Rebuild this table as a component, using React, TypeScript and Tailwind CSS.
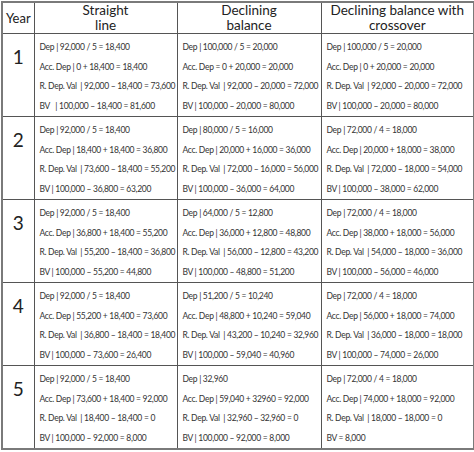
import React from "react";

type Cell = string[];

const rows: { year: string; cols: Cell[] }[] = [
  {
    year: "1",
    cols: [
      ["Dep | 92,000 / 5 = 18,400", "Acc. Dep | 0 + 18,400 = 18,400", "R. Dep. Val  | 92,000 – 18,400 = 73,600", "BV   | 100,000 – 18,400 = 81,600"],
      ["Dep | 100,000 / 5 = 20,000", "Acc. Dep = 0 + 20,000 = 20,000", "R. Dep. Val  | 92,000 – 20,000 = 72,000", "BV | 100,000 – 20,000 = 80,000"],
      ["Dep | 100,000 / 5 = 20,000", "Acc. Dep | 0 + 20,000 = 20,000", "R. Dep. Val  | 92,000 – 20,000 = 72,000", "BV | 100,000 – 20,000 = 80,000"],
    ],
  },
  {
    year: "2",
    cols: [
      ["Dep | 92,000 / 5 = 18,400", "Acc. Dep | 18,400 + 18,400 = 36,800", "R. Dep. Val  | 73,600 – 18,400 = 55,200", "BV | 100,000 – 36,800 = 63,200"],
      ["Dep | 80,000 / 5 = 16,000", "Acc. Dep | 20,000 + 16,000 = 36,000", "R. Dep. Val  | 72,000 – 16,000 = 56,000", "BV | 100,000 – 36,000 = 64,000"],
      ["Dep | 72,000 / 4 = 18,000", "Acc. Dep | 20,000 + 18,000 = 38,000", "R. Dep. Val  | 72,000 – 18,000 = 54,000", "BV | 100,000 – 38,000 = 62,000"],
    ],
  },
  {
    year: "3",
    cols: [
      ["Dep | 92,000 / 5 = 18,400", "Acc. Dep | 36,800 + 18,400 = 55,200", "R. Dep. Val  | 55,200 – 18,400 = 36,800", "BV | 100,000 – 55,200 = 44,800"],
      ["Dep | 64,000 / 5 = 12,800", "Acc. Dep | 36,000 + 12,800 = 48,800", "R. Dep. Val  | 56,000 – 12,800 = 43,200", "BV | 100,000 – 48,800 = 51,200"],
      ["Dep | 72,000 / 4 = 18,000", "Acc. Dep | 38,000 + 18,000 = 56,000", "R. Dep. Val  | 54,000 – 18,000 = 36,000", "BV | 100,000 – 56,000 = 46,000"],
    ],
  },
  {
    year: "4",
    cols: [
      ["Dep | 92,000 / 5 = 18,400", "Acc. Dep | 55,200 + 18,400 = 73,600", "R. Dep. Val  | 36,800 – 18,400 = 18,400", "BV | 100,000 – 73,600 = 26,400"],
      ["Dep | 51,200 / 5 = 10,240", "Acc. Dep | 48,800 + 10,240 = 59,040", "R. Dep. Val  | 43,200 – 10,240 = 32,960", "BV | 100,000 – 59,040 = 40,960"],
      ["Dep | 72,000 / 4 = 18,000", "Acc. Dep | 56,000 + 18,000 = 74,000", "R. Dep. Val  | 36,000 – 18,000 = 18,000", "BV | 100,000 – 74,000 = 26,000"],
    ],
  },
  {
    year: "5",
    cols: [
      ["Dep | 92,000 / 5 = 18,400", "Acc. Dep | 73,600 + 18,400 = 92,000", "R. Dep. Val  | 18,400 – 18,400 = 0", "BV | 100,000 – 92,000 = 8,000"],
      ["Dep | 32,960", "Acc. Dep | 59,040 + 32960 = 92,000", "R. Dep. Val  | 32,960 – 32,960 = 0", "BV | 100,000 – 92,000 = 8,000"],
      ["Dep | 72,000 / 4 = 18,000", "Acc. Dep | 74,000 + 18,000 = 92,000", "R. Dep. Val  | 18,000 – 18,000 = 0", "BV = 8,000"],
    ],
  },
];

export default function App() {
  return (
    <div className="w-[474px] h-[452px] bg-white pl-px pt-px font-['Lato',sans-serif] text-[#333] overflow-hidden">
      <table className="table-fixed border-collapse border-2 border-[#7a7a7a] w-[472px]">
        <colgroup>
          <col className="w-[32px]" />
          <col className="w-[143px]" />
          <col className="w-[144px]" />
          <col className="w-[153px]" />
        </colgroup>
        <thead>
          <tr className="h-[30px]">
            <th className="border border-[#555] p-0 font-normal text-[13px] leading-[15px] text-center align-middle text-[#222]">Year</th>
            <th className="border border-[#555] p-0 font-normal text-[13.5px] leading-[15px] text-center align-middle text-[#222]">
              Straight
              <br />
              line
            </th>
            <th className="border border-[#555] p-0 font-normal text-[13.5px] leading-[15px] text-center align-middle text-[#222]">
              Declining
              <br />
              balance
            </th>
            <th className="border border-[#555] p-0 font-normal text-[13.5px] leading-[15px] text-center align-middle text-[#222]">
              Declining balance with
              <br />
              crossover
            </th>
          </tr>
        </thead>
        <tbody>
          {rows.map((r) => (
            <tr key={r.year} className="h-[83px]">
              <td className="border border-[#555] p-0 align-top text-center text-[19px] leading-[19px] pt-[13px] text-[#222]">{r.year}</td>
              {r.cols.map((c, i) => (
                <td key={i} className="border border-[#555] align-top pl-[5px] pr-0 pt-[4px] pb-0">
                  <div className="flex flex-col">
                    {c.map((line, j) => (
                      <div key={j} className="whitespace-pre text-[8.5px] leading-[19.5px] tracking-[-0.3px]">
                        {line}
                      </div>
                    ))}
                  </div>
                </td>
              ))}
            </tr>
          ))}
        </tbody>
      </table>
    </div>
  );
}
